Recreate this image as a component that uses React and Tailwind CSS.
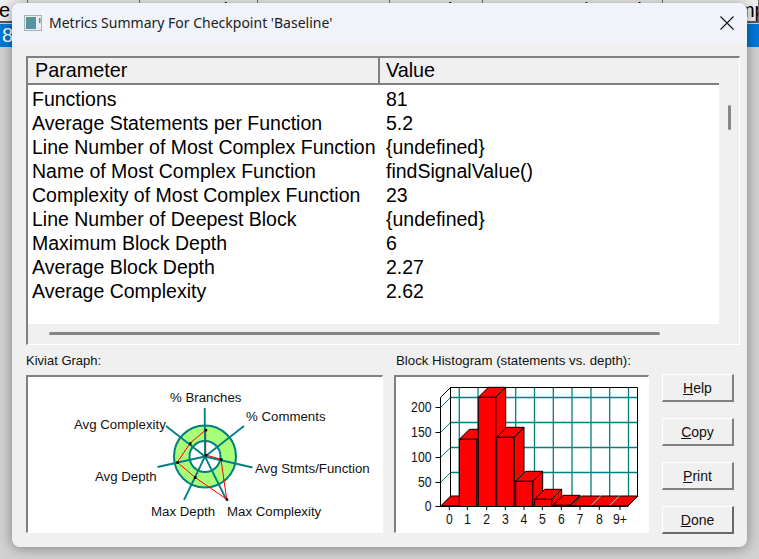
import React from "react";

const columns = [
  ["w-[28px] justify-end pr-[17px]", "Line"],
  ["w-[112px] pl-[8px]", "Statements"],
  ["w-[118px] pl-[8px]", "% Branches"],
  ["w-[132px] pl-[8px]", "% Comments"],
  ["w-[93px] pl-[8px]", "Functions"],
  ["w-[180px] pl-[8px]", "Avg Stmts/Function"],
  ["w-[96px] pl-[6px]", "Max Complexity"],
];

const metrics = [
  ["Functions", "81"],
  ["Average Statements per Function", "5.2"],
  ["Line Number of Most Complex Function", "{undefined}"],
  ["Name of Most Complex Function", "findSignalValue()"],
  ["Complexity of Most Complex Function", "23"],
  ["Line Number of Deepest Block", "{undefined}"],
  ["Maximum Block Depth", "6"],
  ["Average Block Depth", "2.27"],
  ["Average Complexity", "2.62"],
];

const buttons = [
  ["H", "elp", "border-[#808080]"],
  ["C", "opy", "border-[#808080]"],
  ["P", "rint", "border-[#808080]"],
  ["D", "one", "border-[#696969]"],
];

const spokes = [
  [204.7, 408],
  [244, 426],
  [252.5, 467.5],
  [226, 499],
  [184, 500],
  [157.5, 467],
  [166, 426],
];

const redPoints = [
  [205.7, 455],
  [221, 459.3],
  [226.7, 499.3],
  [195, 477.3],
  [177.3, 462.3],
  [190, 443.3],
  [205.7, 430],
];

const kiviatLabels = [
  ["% Branches", 170, 401.5],
  ["% Comments", 246, 420.5],
  ["Avg Complexity", 74, 428.5],
  ["Avg Stmts/Function", 255, 472.5],
  ["Avg Depth", 95, 480.5],
  ["Max Depth", 151, 515.5],
  ["Max Complexity", 227, 515.5],
];

const bars = [
  [440.7, 459.3, 506, 18.6],
  [459.3, 476.7, 439.3, 17.4],
  [478.3, 495.7, 397.3, 17.4],
  [496.7, 514, 437.3, 17.3],
  [515.7, 532.7, 481.3, 17],
  [534.7, 551.7, 499.3, 17],
  [553, 570, 505.3, 17],
  [571.5, 590, 506, 18.5],
  [590.5, 609, 506, 18.5],
  [609.5, 627.7, 506, 18.2],
];

const xLabels = ["0", "1", "2", "3", "4", "5", "6", "7", "8", "9+"];
const xCenters = [449.3, 467.3, 486.7, 505.3, 524, 542.3, 561.3, 580, 599.3, 620];
const yLabels = [["200", 407.3], ["150", 432.3], ["100", 457.3], ["50", 482.3], ["0", 506.3]];
const gridX = [459.3, 478, 497, 515.7, 534.5, 553.3, 572, 591, 609.7, 628.5];

function Kiviat() {
  return (
    <svg width="353" height="155" viewBox="28 377 353 155" className="block" fontFamily="'Liberation Sans', Arial, sans-serif">
      <circle cx="205" cy="456.5" r="31" fill="#a8ff78" stroke="#008080" strokeWidth="2" />
      <circle cx="205" cy="456.5" r="15.5" fill="#fff" stroke="#008080" strokeWidth="2" />
      {spokes.map(([x, y], i) => (
        <line key={i} x1="205" y1="456.5" x2={x} y2={y} stroke="#008080" strokeWidth="1.8" />
      ))}
      <polygon points={redPoints.map((p) => p.join(",")).join(" ")} fill="none" stroke="#ff0000" strokeWidth="1" />
      {redPoints.map(([x, y], i) => (
        <rect key={i} x={x - 1} y={y - 1} width="2.5" height="2.5" fill="#000" />
      ))}
      {kiviatLabels.map(([text, x, y]) => (
        <text key={text} x={x} y={y} fontSize="13.25" fill="#111">
          {text}
        </text>
      ))}
    </svg>
  );
}

function Histogram() {
  return (
    <svg width="253" height="155" viewBox="396 377 253 155" className="block" fontFamily="'Liberation Sans', Arial, sans-serif">
      {/* back wall and grid */}
      {gridX.map((x) => (
        <line key={x} x1={x} y1="387.5" x2={x} y2="497" stroke="#008080" strokeWidth="1.3" />
      ))}
      {[397.5, 422.5, 447.5, 472.5].map((y) => (
        <g key={y}>
          <line x1="450.5" y1={y} x2="638" y2={y} stroke="#008080" strokeWidth="1.3" />
          <line x1="440.5" y1={y + 10} x2="450.5" y2={y} stroke="#008080" strokeWidth="1" />
        </g>
      ))}
      <path d="M440.5 506.5V397.5L450.5 387.5H637.5V496.5L627.5 506.5H440.5M450.5 387.5V496.5L440.5 506.5" fill="none" stroke="#000" strokeWidth="1" />
      {yLabels.map(([, y]) => (
        <line key={y} x1="435.5" y1={Math.floor(y) + 0.5} x2="440.5" y2={Math.floor(y) + 0.5} stroke="#000" strokeWidth="1" />
      ))}
      {xCenters.map((x) => (
        <line key={x} x1={x} y1="506.5" x2={x} y2="510" stroke="#000" strokeWidth="1" />
      ))}
      {/* bars, drawn left to right so each front covers the previous side */}
      {bars.map(([x1, x2, top, w], i) => (
        <g key={i} fill="#ff0000" stroke="#000" strokeWidth="1" strokeLinejoin="miter">
          <polygon points={`${x2},${top} ${x2 + 10},${top - 10} ${x2 + 10},496.5 ${x2},506`} />
          <polygon points={`${x1},${top} ${x1 + 10},${top - 10} ${x1 + w + 10},${top - 10} ${x2},${top}`} />
          <rect x={x1} y={top} width={x2 - x1} height={506.5 - top} />
        </g>
      ))}
      <line x1="591" y1="505.5" x2="600" y2="496.5" stroke="#fff" strokeWidth="1" />
      <line x1="609.8" y1="505.5" x2="618.8" y2="496.5" stroke="#fff" strokeWidth="1" />
      {yLabels.map(([text, y]) => (
        <text key={text} x="431.5" y={y + 5} textAnchor="end" fontSize="14" fill="#111" textLength={text.length * 6.8} lengthAdjust="spacingAndGlyphs">
          {text}
        </text>
      ))}
      {xLabels.map((text, i) => (
        <text key={text} x={xCenters[i]} y="524" textAnchor="middle" fontSize="14" fill="#111" textLength={text === "9+" ? 14 : 6.8} lengthAdjust="spacingAndGlyphs">
          {text}
        </text>
      ))}
    </svg>
  );
}

function TitleIcon() {
  return (
    <svg width="18" height="16" viewBox="0 0 18 16" className="block">
      <defs>
        <linearGradient id="ico" x1="0" y1="0" x2="1" y2="1">
          <stop offset="0" stopColor="#4f9a7f" />
          <stop offset="1" stopColor="#5a8fc0" />
        </linearGradient>
      </defs>
      <rect x="0.5" y="0.5" width="17" height="15" fill="#e8ecef" stroke="#a8b2ba" />
      <rect x="2" y="2" width="10" height="12" fill="url(#ico)" />
      <rect x="15" y="3" width="1.5" height="5" fill="#4f9a80" />
    </svg>
  );
}

export default function App() {
  return (
    <div className="relative h-[559px] w-[759px] overflow-hidden bg-[#d2d2d2] font-['Liberation_Sans',Arial,sans-serif] text-black">
      {/* the grid behind the dialog */}
      <div className="flex h-[23px] border-b-2 border-[#5a5a5a] bg-[#f0f0f0] text-[20px] leading-[20px]">
        {columns.map(([cls, label]) => (
          <div key={label} className={`flex shrink-0 overflow-hidden whitespace-nowrap border-r border-[#707070] ${cls}`}>
            {label}
          </div>
        ))}
      </div>
      <div className="mt-px h-[23px] bg-[#0078d7] pl-[2px] text-[20px] leading-[23px] text-white">81</div>

      {/* dialog */}
      <div className="absolute left-[12px] top-[3px] flex h-[544px] w-[735px] flex-col overflow-hidden rounded-[8px] bg-[#f0f0f0] shadow-[0_1px_14px_rgba(0,0,0,0.4)]">
        <div className="flex h-[39px] shrink-0 items-center bg-[#f0f3f9] pl-[12px] pr-[13px]">
          <TitleIcon />
          <span className="ml-[7px] font-['Noto_Sans',sans-serif] text-[14px] text-[#1c1c1c]">Metrics Summary For Checkpoint 'Baseline'</span>
          <svg width="14" height="14" viewBox="0 0 14 14" className="ml-auto">
            <path d="M0.5 0.5L13.5 13.5M13.5 0.5L0.5 13.5" stroke="#111" strokeWidth="1.1" fill="none" />
          </svg>
        </div>

        <div className="ml-[14px] mt-[14px] flex h-[289px] w-[714px] shrink-0 border-b border-l-2 border-r border-t-2 border-b-white border-l-[#808080] border-r-white border-t-[#808080]">
          <div className="flex w-[691px] shrink-0 flex-col">
            <div className="flex h-[27px] shrink-0 border-b-2 border-[#808080] text-[19.8px] leading-[25px]">
              <div className="w-[352px] border-r-2 border-[#808080] pl-[7px]">Parameter</div>
              <div className="pl-[6px]">Value</div>
            </div>
            <div className="h-[239px] shrink-0 bg-white pt-[2px] text-[19.5px] leading-[24px]">
              {metrics.map(([name, value]) => (
                <div key={name} className="grid h-[24px] grid-cols-[352px_1fr] whitespace-nowrap">
                  <span className="pl-[4px]">{name}</span>
                  <span className="pl-[6px]">{value}</span>
                </div>
              ))}
            </div>
            <div className="pl-[21px] pt-[8px]">
              <div className="h-[3px] w-[611px] rounded-full bg-[#868686]" />
            </div>
          </div>
          <div className="pl-[9px] pt-[47px]">
            <div className="h-[25px] w-[3px] rounded-full bg-[#868686]" />
          </div>
        </div>

        <div className="ml-[14px] mt-[7px] flex items-start text-[13.25px] leading-[16px] text-[#111]">
          <div className="w-[357px]">
            <div className="mb-[6px] mt-px h-[16px] text-[13px]">Kiviat Graph:</div>
            <div className="h-[158px] w-[357px] border-b border-l-2 border-r border-t-2 border-b-white border-l-[#808080] border-r-white border-t-[#808080] bg-white">
              <Kiviat />
            </div>
          </div>
          <div className="ml-[11px] w-[255px]">
            <div className="mb-[6px] mt-px h-[16px] whitespace-nowrap pl-[2px]">Block Histogram (statements vs. depth):</div>
            <div className="h-[158px] w-[255px] border-b border-l-2 border-r border-t-2 border-b-white border-l-[#808080] border-r-white border-t-[#808080] bg-white">
              <Histogram />
            </div>
          </div>
          <div className="ml-[13px] mt-[22px] flex flex-col gap-[16px]">
            {buttons.map(([key, rest, color]) => (
              <button
                key={key}
                className={`h-[28px] w-[72px] border-b-2 border-l border-r-2 border-t bg-[#f0f0f0] text-center text-[14px] text-[#111] border-l-white border-t-white ${color}`}
              >
                <span className="underline">{key}</span>
                {rest}
              </button>
            ))}
          </div>
        </div>
      </div>
    </div>
  );
}
